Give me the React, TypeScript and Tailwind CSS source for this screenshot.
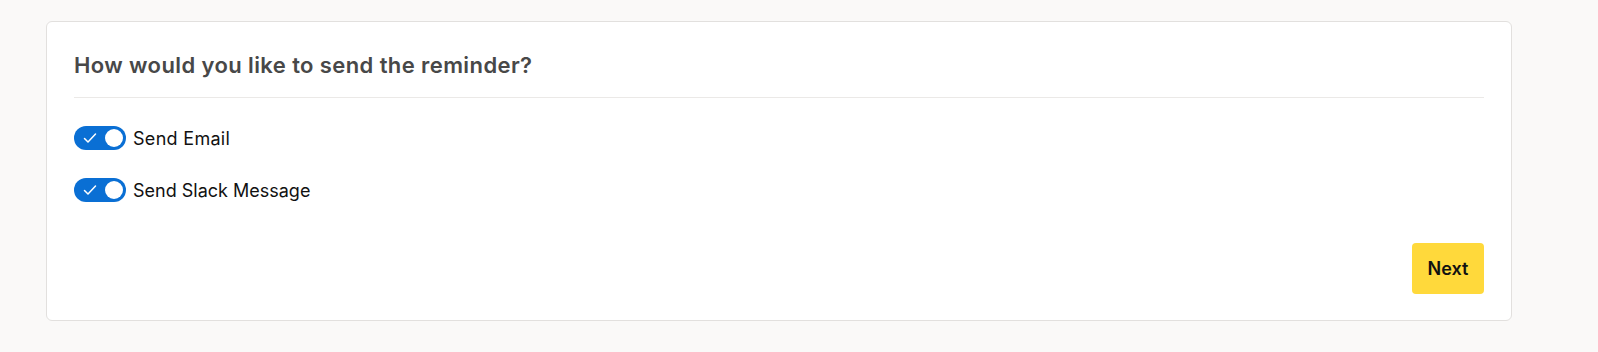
import React, { useState } from 'react';

const Toggle = ({ on, onChange }: { on: boolean; onChange: () => void }) => (
  <button
    onClick={onChange}
    className={`relative flex items-center w-[52px] h-[24px] rounded-full shrink-0 ${on ? 'bg-[#0a6fd4]' : 'bg-gray-300'}`}
  >
    {on && (
      <svg className="absolute left-[9px] top-[6px]" width="14" height="12" viewBox="0 0 14 12" fill="none">
        <path d="M1.5 6.5 L5 10 L12.5 2" stroke="white" strokeWidth="1.5" strokeLinecap="round" strokeLinejoin="round" />
      </svg>
    )}
    <span className={`absolute top-[3px] w-[18px] h-[18px] rounded-full bg-white ${on ? 'right-[3px]' : 'left-[3px]'}`} />
  </button>
);

export default function App() {
  const [email, setEmail] = useState(true);
  const [slack, setSlack] = useState(true);

  return (
    <div className="min-h-[352px] bg-[#faf9f8] pt-[21px] pl-[46px]" style={{ fontFamily: 'Inter, "Noto Sans", sans-serif' }}>
      <div className="w-[1466px] bg-white border border-[#e2e0de] rounded-[6px] px-[27px] pt-[29px] pb-[26px]">
        <h2 className="text-[22px] leading-[28px] tracking-[0.4px] font-semibold text-[#484848] pb-[18px] border-b border-[#ebe9e7]">
          How would you like to send the reminder?
        </h2>
        <div className="flex flex-col gap-[28px] pt-[28px]">
          <label className="flex items-center gap-[7px] h-[24px]">
            <Toggle on={email} onChange={() => setEmail(!email)} />
            <span className="text-[18px] tracking-[0.3px] text-[#111]">Send Email</span>
          </label>
          <label className="flex items-center gap-[7px] h-[24px]">
            <Toggle on={slack} onChange={() => setSlack(!slack)} />
            <span className="text-[18px] text-[#111]">Send Slack Message</span>
          </label>
        </div>
        <div className="flex justify-end pt-[41px]">
          <button className="w-[72px] h-[51px] rounded-[4px] bg-[#ffd93b] text-[18px] font-semibold text-[#111]">
            Next
          </button>
        </div>
      </div>
    </div>
  );
}
